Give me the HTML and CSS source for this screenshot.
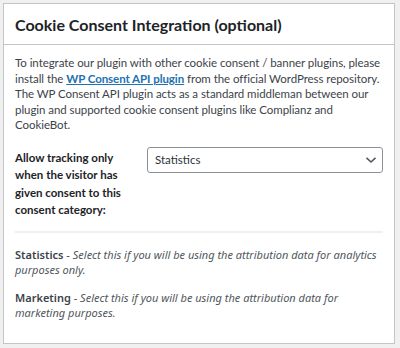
FILE: index.html
```html
<!DOCTYPE html>
<html lang="en">
<head>
    <meta charset="UTF-8">
    <title>Cookie Consent Integration</title>
    <link rel="stylesheet" href="styles.css">
</head>
<body>

<div class="postbox">
    <h2 class="postbox-title">Cookie Consent Integration (optional)</h2>
    <div class="inside">
        <p class="intro">
            To integrate our plugin with other cookie consent / banner plugins, please
            install the <a href="#">WP Consent API plugin</a> from the official WordPress repository.
            The WP Consent API plugin acts as a standard middleman between our
            plugin and supported cookie consent plugins like Complianz and
            CookieBot.
        </p>

        <div class="form-row">
            <label for="consent-category">Allow tracking only when the visitor has given consent to this consent category:</label>
            <div class="select-wrap">
                <select id="consent-category">
                    <option>Statistics</option>
                    <option>Marketing</option>
                </select>
                <svg class="chevron" width="12" height="8" viewBox="0 0 12 8"><path d="M1.5 1.8 L6 6 L10.5 1.8" fill="none" stroke="#50575e" stroke-width="1.6"/></svg>
            </div>
        </div>

        <hr>

        <p class="note"><span class="term">Statistics</span> - <em>Select this if you will be using the attribution data for analytics purposes only.</em></p>
        <p class="note"><span class="term">Marketing</span> - <em>Select this if you will be using the attribution data for marketing purposes.</em></p>
    </div>
</div>

</body>
</html>
```

FILE: styles.css
```css
body { margin: 0; background: #f0f0f1; font-family: Lato, "Noto Sans", sans-serif; color: #3c434a; }
.postbox { margin: 3px 5px 0 3px; background: #fff; border: 1px solid #c3c4c7; height: 341px; box-sizing: border-box; }
.postbox-title { margin: 0; padding: 12px 11px 11px; font-size: 16px; font-weight: 700; color: #1d2327; border-bottom: 1px solid #c3c4c7; line-height: 17px; }
.inside { padding: 10px 9px 0 11px; font-size: 11.5px; line-height: 15.5px; }
.intro { margin: 0 0 14px; letter-spacing: -0.06px; }
.intro a { color: #2271b1; font-weight: 700; }
.form-row { display: flex; gap: 14px; align-items: flex-start; margin-right: 2px; }
.form-row label { width: 118px; font-weight: 700; color: #1d2327; line-height: 17.5px; padding-top: 2px; }
.select-wrap { position: relative; flex: 1; }
select { display: block; width: 100%; height: 26px; appearance: none; border: 1px solid #8c8f94; border-radius: 3px; background: #fff; font: inherit; color: #2c3338; padding: 0 24px 0 7px; }
.chevron { position: absolute; right: 6px; top: 9px; }
hr { border: 0; border-top: 2px solid #f0f0f1; margin: 12px 2px 14px 0; }
.note { margin: 0 2px 12px 0; font-family: "Noto Sans", sans-serif; font-size: 11px; }
.note .term { color: #3c434a; font-weight: 600; }
.note em { color: #50575e; }
```
